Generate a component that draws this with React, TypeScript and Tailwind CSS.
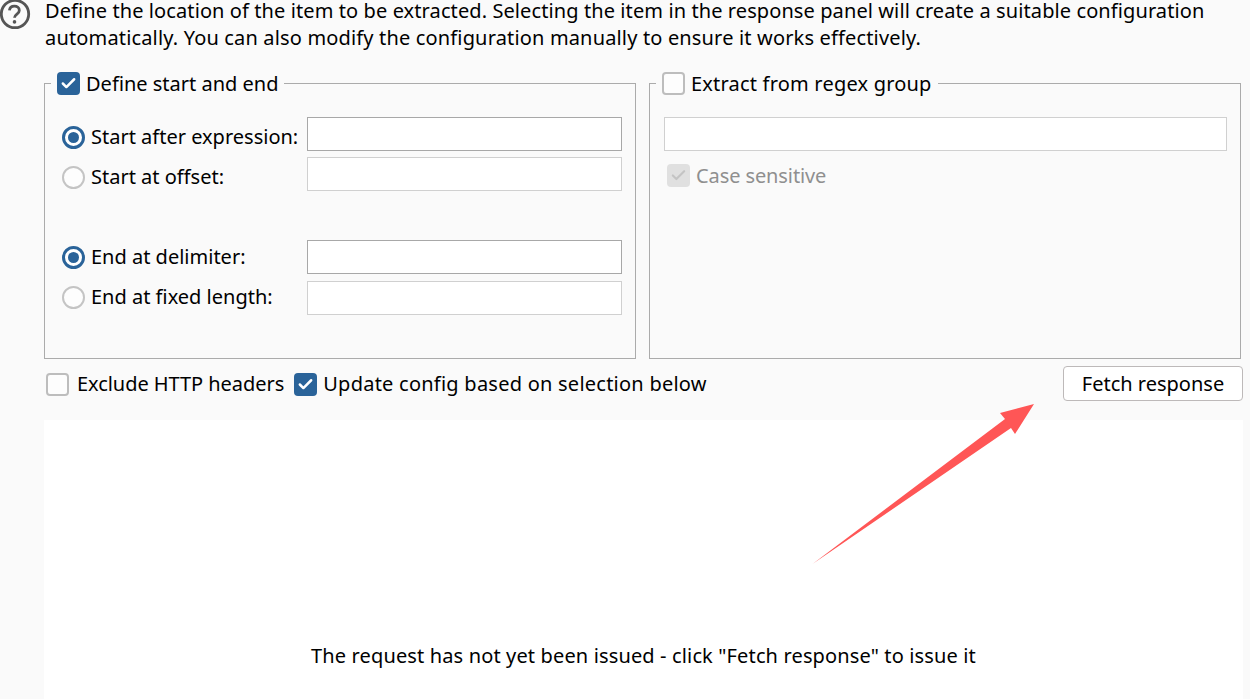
import { Check } from 'lucide-react';

const fontClass = "font-['Noto_Sans','Open_Sans',sans-serif]";

function CheckBox({ checked = false, disabled = false }: { checked?: boolean; disabled?: boolean }) {
  if (disabled) {
    return (
      <span className="flex h-[23px] w-[23px] shrink-0 items-center justify-center rounded-[4px] bg-[#e0e0e0]">
        <Check size={17} strokeWidth={3} color="#c4c4c4" />
      </span>
    );
  }
  if (checked) {
    return (
      <span className="flex h-[23px] w-[23px] shrink-0 items-center justify-center rounded-[4px] bg-[#2a6399]">
        <Check size={17} strokeWidth={3.5} color="#ffffff" />
      </span>
    );
  }
  return <span className="h-[23px] w-[23px] shrink-0 rounded-[4px] border-2 border-[#bdbdbd] bg-[#fdfdfd]" />;
}

function Radio({ checked = false }: { checked?: boolean }) {
  if (checked) {
    return (
      <span className="flex h-[23px] w-[23px] shrink-0 items-center justify-center rounded-full border-[3px] border-[#2a6399] bg-white">
        <span className="h-[11px] w-[11px] rounded-full bg-[#2a6399]" />
      </span>
    );
  }
  return <span className="h-[23px] w-[23px] shrink-0 rounded-full border-2 border-[#c4c4c4] bg-[#fdfdfd]" />;
}

// labelClass nudges the radio + label: they don't line up with the inputs in the original
function RadioRow({ label, checked = false, labelClass = '' }: { label: string; checked?: boolean; labelClass?: string }) {
  return (
    <div className="flex h-[34px] items-center">
      <div className={`flex w-[262px] items-center gap-[6px] pl-[17px] ${labelClass}`}>
        <Radio checked={checked} />
        <span className="mt-[-2px] whitespace-nowrap">{label}</span>
      </div>
      <div className={`h-[34px] w-[315px] bg-white border ${checked ? 'border-[#a8a8a8]' : 'border-[#d0d0d0]'}`} />
    </div>
  );
}

export default function App() {
  return (
    <div className={`${fontClass} relative h-[699px] w-[1250px] overflow-hidden bg-[#fafafa] text-[20px] leading-[27px] text-black`}>
      <div className="flex h-[63px] items-start">
        <svg width="31" height="33" viewBox="0 0 31 33" className="mt-[-2px] shrink-0" fill="none">
          <circle cx="15" cy="16" r="13.7" stroke="#555555" strokeWidth="2.8" />
          <path d="M9.4 12.4c.4-2.7 2.4-4.2 5-4.2 2.8 0 4.9 1.7 4.9 4.2 0 3.7-4.8 3.6-4.8 7.4" stroke="#555555" strokeWidth="2.8" />
          <circle cx="14.5" cy="23.9" r="1.8" fill="#555555" />
        </svg>
        <div className="ml-[14px] flex flex-col gap-[6px] whitespace-nowrap">
          <p className="h-[21px] leading-[21px] tracking-[0.095px]">
            Define the location of the item to be extracted. Selecting the item in the response panel will create a suitable configuration
          </p>
          <p className="h-[21px] leading-[21px] tracking-[0.16px]">
            automatically. You can also modify the configuration manually to ensure it works effectively.
          </p>
        </div>
      </div>

      <div className="mt-[7px] ml-[44px] flex w-[1197px] gap-[13px]">
        <fieldset className="h-[289px] w-[592px] border border-[#ababab]">
          <legend className="ml-[6px] flex items-center gap-[6px] pl-[6px] pr-[6px]">
            <CheckBox checked />
            <span>Define start and end</span>
          </legend>
          <div className="mt-[20px] flex flex-col gap-[6px]">
            <RadioRow label="Start after expression:" checked labelClass="mt-[6px]" />
            <RadioRow label="Start at offset:" labelClass="mt-[6px]" />
          </div>
          <div className="mt-[49px] flex flex-col gap-[7px]">
            <RadioRow label="End at delimiter:" checked />
            <RadioRow label="End at fixed length:" labelClass="mt-[-2px]" />
          </div>
        </fieldset>
        <fieldset className="h-[289px] w-[592px] border border-[#ababab]">
          <legend className="ml-[6px] flex items-center gap-[6px] pl-[6px] pr-[6px]">
            <CheckBox />
            <span className="tracking-[0.2px]">Extract from regex group</span>
          </legend>
          <div className="ml-[14px] mr-[13px] mt-[20px] h-[34px] border border-[#d0d0d0] bg-white" />
          <div className="ml-[17px] mt-[11px] flex items-center gap-[6px] text-[#8f8f8f]">
            <CheckBox disabled />
            <span className="tracking-[-0.1px]">Case sensitive</span>
          </div>
        </fieldset>
      </div>

      <div className="ml-[46px] mt-[7px] flex h-[36px] w-[1197px] items-center">
        <CheckBox />
        <span className="ml-[8px] mt-[-2px] tracking-[-0.05px]">Exclude HTTP headers</span>
        <span className="ml-[10px]"><CheckBox checked /></span>
        <span className="ml-[6px] mt-[-2px] tracking-[0.24px]">Update config based on selection below</span>
        <button className="ml-auto mb-[1px] h-[35px] w-[180px] rounded-[4px] border border-[#bdb9b9] bg-white">Fetch response</button>
      </div>

      <div className="ml-[44px] mt-[18px] flex h-[279px] w-[1199px] items-end justify-center bg-white pb-[30px]">
        <span className="tracking-[0.14px]">The request has not yet been issued - click "Fetch response" to issue it</span>
      </div>

      <svg className="pointer-events-none absolute left-0 top-0" width="1250" height="699" viewBox="0 0 1250 699">
        <polygon points="812.5,564 1005,419 1000,413 1034,404 1015,434 1011,428" fill="#ff5656" />
      </svg>
    </div>
  );
}
